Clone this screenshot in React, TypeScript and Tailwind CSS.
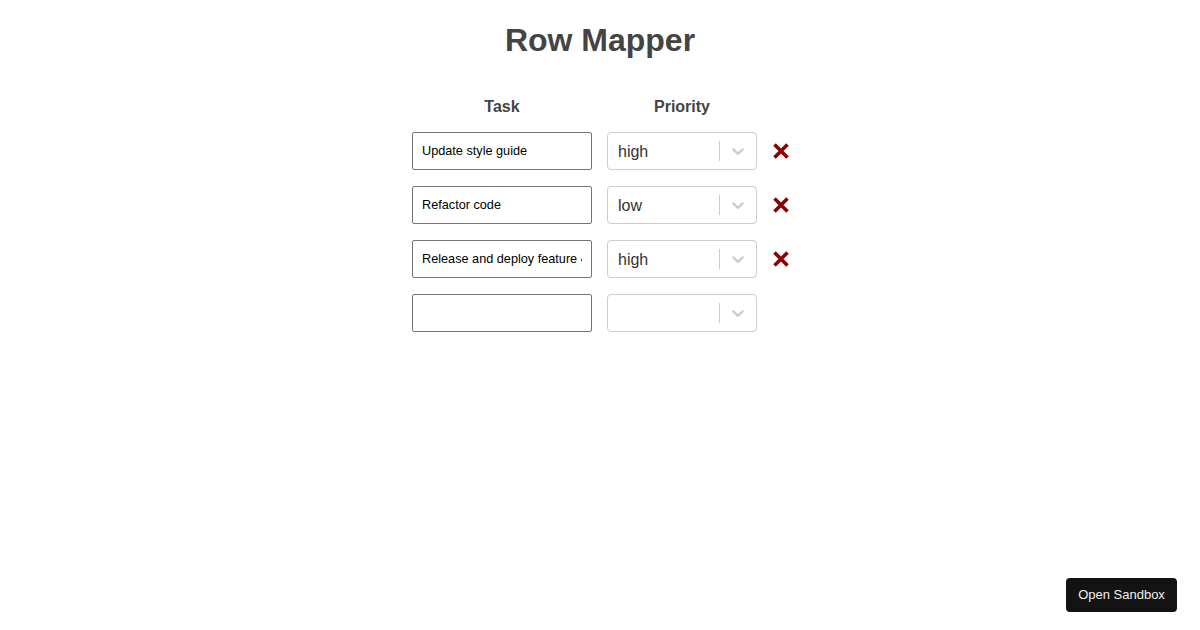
import React, { useState } from "react";

interface Row {
    task: string;
    priority: string;
}

const ChevronIcon = () => (
    <svg height="20" width="20" viewBox="0 0 20 20" aria-hidden="true" className="fill-[#cccccc]">
        <path d="M4.516 7.548c0.436-0.446 1.043-0.481 1.576 0l3.908 3.747 3.908-3.747c0.533-0.481 1.141-0.446 1.574 0 0.436 0.445 0.408 1.197 0 1.615-0.406 0.418-4.695 4.502-4.695 4.502-0.217 0.223-0.502 0.335-0.787 0.335s-0.57-0.112-0.789-0.335c0 0-4.287-4.084-4.695-4.502s-0.436-1.17 0-1.615z" />
    </svg>
);

const RemoveIcon = () => (
    <svg width="18" height="18" viewBox="0 0 18 18" aria-hidden="true">
        <path d="M2.5 2.5L15.5 15.5M15.5 2.5L2.5 15.5" stroke="#8b0000" strokeWidth="3.6" strokeLinecap="butt" />
    </svg>
);

const PrioritySelect = ({ value }: { value: string }) => (
    <div className="flex h-[38px] w-[150px] items-center rounded-[4px] border border-[#cccccc] bg-white">
        <div className="flex-1 px-2 pt-[3px] pb-[1px]">
            <span className="ml-[2px] text-[16px] text-[#333333]">{value}</span>
        </div>
        <div className="flex items-center self-stretch">
            <span className="my-2 w-px self-stretch bg-[#cccccc]" />
            <div className="p-2">
                <ChevronIcon />
            </div>
        </div>
    </div>
);

export default function App() {
    const [rows, setRows] = useState<Row[]>([
        { task: "Update style guide", priority: "high" },
        { task: "Refactor code", priority: "low" },
        { task: "Release and deploy feature 42", priority: "high" },
    ]);

    const updateTask = (i: number, value: string) => {
        setRows(rows.map((r, idx) => (idx === i ? { ...r, task: value } : r)));
    };

    const removeRow = (i: number) => setRows(rows.filter((_, idx) => idx !== i));

    const allRows = [...rows, { task: "", priority: "" }];

    return (
        <div className="relative min-h-[630px] w-full bg-white font-['Liberation_Sans',Arial,sans-serif] text-[#444444]">
            <h1 className="mt-[22px] text-center text-[32px] font-bold leading-[36px]">Row Mapper</h1>

            <div className="mx-auto mt-[39px] w-[380px] pl-[2px]">
                <div className="grid grid-cols-[180px_150px_18px] gap-x-[15px]">
                    <div className="text-center text-[16px] font-bold leading-[20px]">Task</div>
                    <div className="text-center text-[16px] font-bold leading-[20px]">Priority</div>
                    <div />
                </div>

                <div className="mt-[15px] grid grid-cols-[180px_150px_18px] items-center gap-x-[15px] gap-y-[16px]">
                    {allRows.map((row, i) => (
                        <React.Fragment key={i}>
                            <input
                                value={row.task}
                                onChange={(e) => updateTask(i, e.target.value)}
                                className="h-[38px] w-[180px] rounded-[2px] border border-[#767676] bg-white px-[9px] text-[12.7px] text-black outline-none"
                            />
                            <PrioritySelect value={row.priority} />
                            {i < rows.length ? (
                                <button onClick={() => removeRow(i)} className="flex h-[18px] w-[18px] items-center justify-center">
                                    <RemoveIcon />
                                </button>
                            ) : (
                                <div />
                            )}
                        </React.Fragment>
                    ))}
                </div>
            </div>

            <button className="fixed bottom-[18px] right-[23px] h-[34px] w-[111px] rounded-[4px] bg-[#131313] text-[13px] text-[#f0f0f0]">
                Open Sandbox
            </button>
        </div>
    );
}
